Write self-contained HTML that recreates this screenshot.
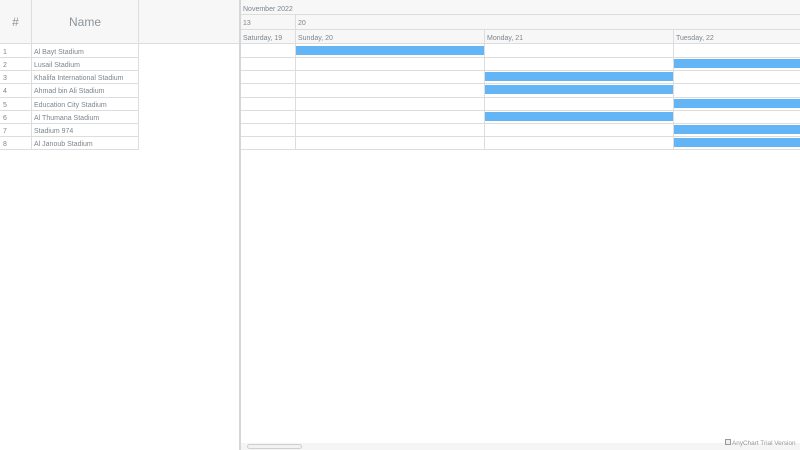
<!DOCTYPE html>
<html><head><meta charset="utf-8"><style>
*{margin:0;padding:0;box-sizing:border-box}
body{width:800px;height:450px;overflow:hidden;background:#fff;font-family:"Liberation Sans",sans-serif;color:#7c868e;position:relative}
.a{position:absolute}
.t{font-size:7px;white-space:nowrap;margin-top:1.5px}
.hl{position:absolute;height:1px;background:#ddd}
.b{position:absolute;height:9px;background:#64b5f6}
</style></head><body>
<div class="a" style="left:0;top:0;width:240px;height:44px;background:#f7f7f7;border-bottom:1px solid #ddd"></div>
<div class="a" style="left:31px;top:0;width:1px;height:44px;background:#ddd"></div>
<div class="a" style="left:138px;top:0;width:1px;height:44px;background:#ddd"></div>
<div class="a" style="left:0;top:15px;width:31px;text-align:center;font-size:12px;color:#8c959c">#</div>
<div class="a" style="left:32px;top:15px;width:106px;text-align:center;font-size:12px;color:#8c959c">Name</div>
<div class="a" style="left:239px;top:0;width:2px;height:450px;background:#d6d6d6"></div>
<div class="a" style="left:241px;top:0;width:559px;height:44px;background:#f7f7f7"></div>
<div class="a" style="left:241px;top:14px;width:559px;height:1px;background:#ddd"></div>
<div class="a" style="left:241px;top:29px;width:559px;height:1px;background:#ddd"></div>
<div class="a" style="left:241px;top:43px;width:559px;height:1px;background:#ddd"></div>
<div class="a" style="left:295px;top:14px;width:1px;height:30px;background:#ddd"></div>
<div class="a" style="left:484px;top:29px;width:1px;height:15px;background:#ddd"></div>
<div class="a" style="left:673px;top:29px;width:1px;height:15px;background:#ddd"></div>
<div class="a t" style="left:243px;top:4px">November 2022</div>
<div class="a t" style="left:243px;top:18px">13</div>
<div class="a t" style="left:298px;top:18px">20</div>
<div class="a t" style="left:243px;top:33px">Saturday, 19</div>
<div class="a t" style="left:298px;top:33px">Sunday, 20</div>
<div class="a t" style="left:487px;top:33px">Monday, 21</div>
<div class="a t" style="left:676px;top:33px">Tuesday, 22</div>
<div class="a" style="left:31px;top:44px;width:1px;height:106px;background:#ddd"></div>
<div class="a" style="left:138px;top:44px;width:1px;height:106px;background:#ddd"></div>
<div class="a" style="left:295px;top:44px;width:1px;height:106px;background:#ddd"></div>
<div class="a" style="left:484px;top:44px;width:1px;height:106px;background:#ddd"></div>
<div class="a" style="left:673px;top:44px;width:1px;height:106px;background:#ddd"></div>

<div class="hl" style="left:0;top:57px;width:139px"></div><div class="hl" style="left:241px;top:57px;width:559px"></div>
<div class="hl" style="left:0;top:70px;width:139px"></div><div class="hl" style="left:241px;top:70px;width:559px"></div>
<div class="hl" style="left:0;top:83px;width:139px"></div><div class="hl" style="left:241px;top:83px;width:559px"></div>
<div class="hl" style="left:0;top:97px;width:139px"></div><div class="hl" style="left:241px;top:97px;width:559px"></div>
<div class="hl" style="left:0;top:110px;width:139px"></div><div class="hl" style="left:241px;top:110px;width:559px"></div>
<div class="hl" style="left:0;top:123px;width:139px"></div><div class="hl" style="left:241px;top:123px;width:559px"></div>
<div class="hl" style="left:0;top:136px;width:139px"></div><div class="hl" style="left:241px;top:136px;width:559px"></div>
<div class="hl" style="left:0;top:149px;width:139px"></div><div class="hl" style="left:241px;top:149px;width:559px"></div>

<div class="a t" style="left:3px;top:47px">1</div><div class="a t" style="left:34px;top:47px">Al Bayt Stadium</div>
<div class="a t" style="left:3px;top:60px">2</div><div class="a t" style="left:34px;top:60px">Lusail Stadium</div>
<div class="a t" style="left:3px;top:73px">3</div><div class="a t" style="left:34px;top:73px">Khalifa International Stadium</div>
<div class="a t" style="left:3px;top:86px">4</div><div class="a t" style="left:34px;top:86px">Ahmad bin Ali Stadium</div>
<div class="a t" style="left:3px;top:100px">5</div><div class="a t" style="left:34px;top:100px">Education City Stadium</div>
<div class="a t" style="left:3px;top:113px">6</div><div class="a t" style="left:34px;top:113px">Al Thumana Stadium</div>
<div class="a t" style="left:3px;top:126px">7</div><div class="a t" style="left:34px;top:126px">Stadium 974</div>
<div class="a t" style="left:3px;top:139px">8</div><div class="a t" style="left:34px;top:139px">Al Janoub Stadium</div>

<div class="b" style="left:296px;top:46px;width:188px"></div>
<div class="b" style="left:674px;top:59px;width:126px"></div>
<div class="b" style="left:485px;top:72px;width:188px"></div>
<div class="b" style="left:485px;top:85px;width:188px"></div>
<div class="b" style="left:674px;top:99px;width:126px"></div>
<div class="b" style="left:485px;top:112px;width:188px"></div>
<div class="b" style="left:674px;top:125px;width:126px"></div>
<div class="b" style="left:674px;top:138px;width:126px"></div>

<div class="a" style="left:241px;top:443px;width:559px;height:7px;background:#f5f5f5"></div>
<div class="a" style="left:247px;top:444px;width:55px;height:5px;border:1px solid #d0d0d0;border-radius:3px;background:#f2f2f2"></div>
<div class="a" style="left:725px;top:439px;width:6px;height:6px;border:1px solid #999;background:#eee"></div>
<div class="a t" style="left:732px;top:438px;font-size:6.4px;color:#999">AnyChart Trial Version</div>
</body></html>
